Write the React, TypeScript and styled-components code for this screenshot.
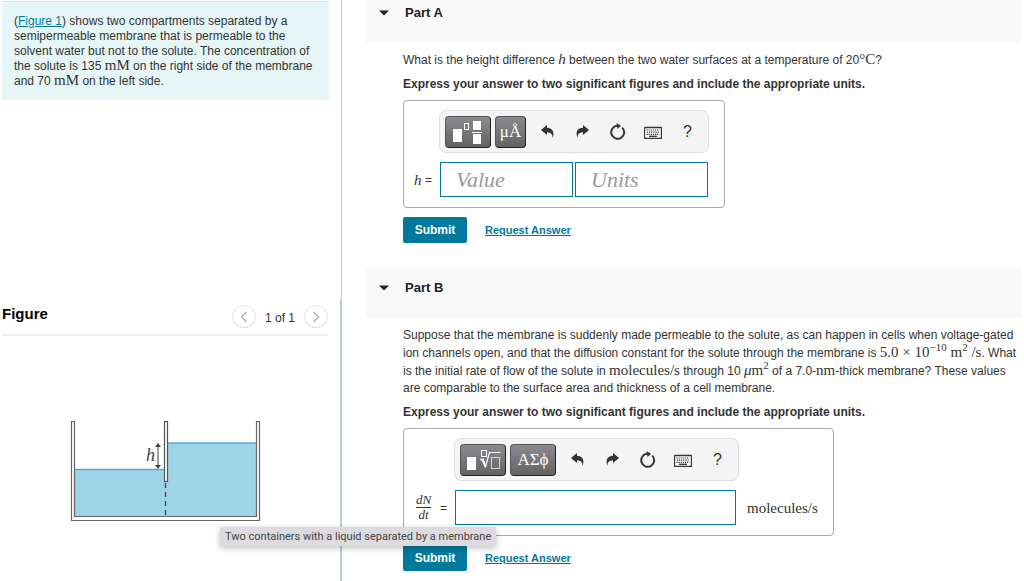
import React from "react";
import styled, { createGlobalStyle } from "styled-components";

const sans = `"Liberation Sans", Arial, sans-serif`;
const serif = `"Liberation Serif", "Times New Roman", serif`;
const teal = "#007a9c";

const GlobalStyle = createGlobalStyle`
  *, *::before, *::after { box-sizing: border-box; }
  body {
    margin: 0;
    background: #fff;
    color: #333;
    font-family: ${sans};
    font-size: 12px;
    overflow: hidden;
  }
`;

const Page = styled.div`
  display: grid;
  grid-template-columns: 342px minmax(0, 1fr);
  min-height: 100vh;
`;

const Sidebar = styled.aside`
  display: grid;
  grid-template-rows: 299px 1fr;
  min-width: 0;
`;

const IntroPane = styled.section`
  border-right: 1px solid #c3c9d6;
  padding: 1px 12px 0 2px;
`;

const Intro = styled.p`
  margin: 0;
  padding: 12px 12px 11px;
  border-top: 1px solid #d9e4e4;
  background: #e6f6f7;
  line-height: 15px;
  white-space: nowrap;
`;

const FigureLink = styled.a`
  color: ${teal};
  text-decoration: underline;
`;

const FigurePane = styled.section`
  position: relative;
  border-right: 2px solid #b9c9de;
  padding: 6px 12px 0 2px;
`;

const FigureHeader = styled.header`
  display: flex;
  align-items: flex-start;
  justify-content: space-between;
  height: 31px;
  border-bottom: 2px solid #f0f0f0;
`;

const FigureTitle = styled.h2`
  margin: 0;
  font-size: 15px;
  line-height: 18px;
  color: #000;
`;

const Pager = styled.nav`
  display: flex;
  align-items: flex-end;
  gap: 9px;
  line-height: 20px;
`;

const PagerButton = styled.button`
  display: grid;
  place-items: center;
  width: 24px;
  height: 23px;
  padding: 0;
  border: 1px solid #e3e3e3;
  border-radius: 50%;
  background: #fff;
`;

const TankWrap = styled.div`
  padding: 84px 0 0 67px;
`;

const Tooltip = styled.div`
  position: absolute;
  left: 220px;
  top: 228px;
  z-index: 2;
  padding: 0 5px;
  border-radius: 2px;
  background: #dedbe0;
  box-shadow: 0 2px 6px rgba(0, 0, 0, 0.25);
  color: #444;
  font-family: Roboto, ${sans};
  font-size: 11px;
  line-height: 19px;
  white-space: nowrap;
`;

const Main = styled.main`
  min-width: 0;
  padding: 0 3px 0 24px;
`;

const PartHeader = styled.header<{ $clipped?: boolean }>`
  display: flex;
  align-items: flex-start;
  gap: 16px;
  height: ${(p) => (p.$clipped ? 43 : 51)}px;
  padding: ${(p) => (p.$clipped ? 4 : 12)}px 12px 0;
  background: #f9f9f9;
`;

const Toggle = styled.button`
  display: grid;
  place-items: center;
  width: 11px;
  height: 18px;
  padding: 0;
  border: 0;
  background: none;
`;

const PartTitle = styled.h2`
  margin: 0;
  font-size: 13px;
  line-height: 18px;
  color: #222;
`;

const PartBody = styled.div`
  padding: 9px 0 24px 37px;
`;

const Question = styled.p`
  margin: 0;
  line-height: 17px;
  white-space: nowrap;
`;

const Instruction = styled.p`
  margin: 7px 0;
  font-weight: bold;
  line-height: 17px;
  white-space: nowrap;
`;

const Card = styled.div<{ $label: number }>`
  display: inline-grid;
  grid-template-columns: ${(p) => p.$label}px auto auto;
  align-items: center;
  align-content: start;
  row-gap: 9px;
  padding: 9px 15px 10px 10px;
  border: 1px solid #a9a9a9;
  border-radius: 4px;
  vertical-align: top;
`;

const Toolbar = styled.div`
  grid-column: 2 / -1;
  justify-self: start;
  display: flex;
  align-items: center;
  height: 43px;
  padding: 0 3px 0 5px;
  border: 1px solid #dedede;
  border-radius: 7px;
  background: #f4f4f4;
  margin-left: -1px;
`;

const PaletteButton = styled.button<{ $width: number }>`
  display: grid;
  place-items: center;
  width: ${(p) => p.$width}px;
  height: 32px;
  margin-right: 4px;
  padding: 0;
  border: 1px solid #555;
  border-right-color: #222;
  border-bottom-color: #222;
  border-radius: 4px;
  background: linear-gradient(#8b8a90, #636363);
  color: #fff;
  font-family: ${serif};
  font-size: 17px;
  line-height: 20px;
`;

const IconButton = styled.button`
  display: grid;
  place-items: center;
  width: 35px;
  height: 32px;
  padding: 0;
  border: 0;
  background: none;
  color: #333;
  font-family: ${sans};
  font-size: 16px;
`;

const Label = styled.label`
  grid-column: 1;
  display: flex;
  align-items: center;
  justify-content: space-between;
  padding-right: 8px;
  font-size: 12px;
`;

const Fraction = styled.span`
  display: inline-flex;
  flex-direction: column;
  align-items: center;
  padding-left: 2px;
  font: italic 13px/14px ${serif};

  span:first-child {
    border-bottom: 1px solid #333;
  }
`;

const Fields = styled.div`
  display: flex;
  gap: 2px;
`;

const Field = styled.input<{ $width: number }>`
  width: ${(p) => p.$width}px;
  height: 35px;
  padding: 0 15px;
  border: 1px solid ${teal};
  border-radius: 0;
  background: #fff;
  font: italic 22px/24px ${serif};

  &::placeholder {
    color: #999;
    opacity: 1;
  }
`;

const Unit = styled.span`
  padding-left: 11px;
  font: 15px/18px ${serif};
`;

const Math = styled.span`
  font-family: ${serif};
  font-size: 15px;
  line-height: 0;

  sup {
    font-size: 11px;
    line-height: 6px;
  }
`;

const Actions = styled.div`
  display: flex;
  align-items: center;
  gap: 18px;
  margin-top: 9px;
`;

const Submit = styled.button`
  width: 64px;
  height: 26px;
  padding: 0;
  border: 0;
  border-radius: 2px;
  background: ${teal};
  color: #fff;
  font: bold 12px/16px ${sans};
`;

const RequestLink = styled.a`
  color: ${teal};
  font-size: 11px;
  font-weight: bold;
  line-height: 16px;
`;

const UndoShape = () => (
  <path d="M0 5 L6 0 V2.800 C11.500 3.200 13.800 7 11.500 13 C11.500 9.200 10 7.500 6 7.300 V10 Z" fill="#333" />
);

const UndoIcon = () => (
  <svg width="13" height="13" viewBox="0 0 13 13"><UndoShape /></svg>
);

const RedoIcon = () => (
  <svg width="13" height="13" viewBox="0 0 13 13"><g transform="matrix(-1 0 0 1 13 0)"><UndoShape /></g></svg>
);

const ResetIcon = () => (
  <svg width="17" height="17" viewBox="0 0 17 17">
    <path d="M13.200 4.600 A6.500 6.500 0 1 1 8.500 2.800" fill="none" stroke="#333" strokeWidth="2" />
    <path d="M7.500 0 L12 2.800 L8.500 6 Z" fill="#333" />
  </svg>
);

const KeyboardIcon = () => (
  <svg width="18" height="15" viewBox="0 0 18 15">
    <g transform="translate(0 3)">
      <rect x="0.500" y="0.500" width="17" height="11" rx="0.500" fill="#fff" stroke="#333" strokeWidth="1.300" />
      <path d="M2.500 3 H15.500 M3 5.200 H15.500 M2.500 7.300 H15.500" stroke="#333" strokeWidth="1.200" strokeDasharray="1.200 0.900" />
      <path d="M5 9.300 H13" stroke="#333" strokeWidth="1.300" />
    </g>
  </svg>
);

const TemplateIcon = () => (
  <svg width="30" height="24" viewBox="0 0 30 24">
    <g fill="#fff">
      <rect x="0" y="9" width="9" height="13" />
      <rect x="20" y="1" width="8" height="9" />
      <rect x="19" y="12" width="10" height="1" />
      <rect x="20" y="14" width="8" height="10" />
    </g>
    <rect x="11.500" y="3.500" width="4" height="6" fill="none" stroke="#fff" />
  </svg>
);

const RootIcon = () => (
  <svg width="36" height="22" viewBox="0 0 36 22">
    <rect x="2" y="8" width="9" height="13" fill="#fff" />
    <g fill="none" stroke="#fff">
      <rect x="16.500" y="1.500" width="5" height="6" />
      <path d="M15 11 L18 10 L20.500 17.500 L24.500 3.500 H35.500" strokeWidth="1.200" />
      <path d="M17.500 10.500 L20.500 18" strokeWidth="2" />
      <rect x="26.500" y="8.500" width="8" height="11" stroke="#d6d6d6" />
    </g>
  </svg>
);

const Chevron = ({ right }: { right?: boolean }) => (
  <svg width="8" height="12" viewBox="0 0 8 12">
    <path d={right ? "M1.500 1 L6.500 6 L1.500 11" : "M6.500 1 L1.500 6 L6.500 11"} fill="none" stroke="#b5b5b5" strokeWidth="1.500" />
  </svg>
);

const Tank = () => (
  <svg width="192" height="102" viewBox="0 0 192 102" role="img" aria-label="Two containers with a liquid separated by a membrane">
    <path d="M5 49 H95 V23 H187 V97 H5 Z" fill="#9fd3e8" />
    <path d="M5 49.500 H95 M98 23 H187" stroke="#55acd8" strokeWidth="1.500" />
    <path d="M2.500 1.500 H5.500 V96.500 H187.500 V1.500 H190.500 V100.500 H2.500 Z" fill="#fff" stroke="#666" strokeWidth="1.200" />
    <rect x="95.500" y="1.500" width="3" height="60" fill="#fff" stroke="#555" strokeWidth="1.200" />
    <path d="M96.500 63 V97" stroke="#444" strokeWidth="1.300" strokeDasharray="5 4" />
    <path d="M89 25 V47" stroke="#444" />
    <path d="M89 23 L92 27 H86 Z M89 49 L92 45 H86 Z" fill="#444" />
    <text x="77" y="41" fontFamily="Liberation Serif, serif" fontStyle="italic" fontSize="18" fill="#444">h</text>
  </svg>
);

const EditIcons = () => (
  <>
    <IconButton type="button" aria-label="Undo"><UndoIcon /></IconButton>
    <IconButton type="button" aria-label="Redo"><RedoIcon /></IconButton>
    <IconButton type="button" aria-label="Reset"><ResetIcon /></IconButton>
    <IconButton type="button" aria-label="Keyboard shortcuts"><KeyboardIcon /></IconButton>
    <IconButton type="button">?</IconButton>
  </>
);

const PartHead = ({ title, clipped }: { title: string; clipped?: boolean }) => (
  <PartHeader $clipped={clipped}>
    <Toggle type="button" aria-label={title} aria-expanded="true">
      <svg width="10" height="6" viewBox="0 0 10 6"><path d="M0 0.500 H10 L5 5.500 Z" fill="#222" /></svg>
    </Toggle>
    <PartTitle>{title}</PartTitle>
  </PartHeader>
);

const SubmitRow = () => (
  <Actions>
    <Submit type="button">Submit</Submit>
    <RequestLink href="#request">Request Answer</RequestLink>
  </Actions>
);

export default function App() {
  return (
    <>
      <GlobalStyle />
      <Page>
        <Sidebar>
          <IntroPane>
            <Intro>
              (<FigureLink href="#figure">Figure 1</FigureLink>) shows two compartments separated by a<br />
              semipermeable membrane that is permeable to the<br />
              solvent water but not to the solute. The concentration of<br />
              the solute is 135 <Math>mM</Math> on the right side of the membrane<br />
              and 70 <Math>mM</Math> on the left side.
            </Intro>
          </IntroPane>
          <FigurePane id="figure">
            <FigureHeader>
              <FigureTitle>Figure</FigureTitle>
              <Pager>
                <PagerButton type="button" aria-label="Previous figure"><Chevron /></PagerButton>
                <span>1 of 1</span>
                <PagerButton type="button" aria-label="Next figure"><Chevron right /></PagerButton>
              </Pager>
            </FigureHeader>
            <TankWrap><Tank /></TankWrap>
            <Tooltip role="tooltip">Two containers with a liquid separated by a membrane</Tooltip>
          </FigurePane>
        </Sidebar>
        <Main>
          <PartHead title="Part A" clipped />
          <PartBody>
            <Question>
              What is the height difference <Math><i>h</i></Math> between the two water surfaces at a temperature of 20<Math>°C</Math>?
            </Question>
            <Instruction>Express your answer to two significant figures and include the appropriate units.</Instruction>
            <Card $label={26}>
              <Toolbar>
                <PaletteButton type="button" $width={46} aria-label="Templates"><TemplateIcon /></PaletteButton>
                <PaletteButton type="button" $width={31}>μÅ</PaletteButton>
                <EditIcons />
              </Toolbar>
              <Label htmlFor="value"><Math><i>h</i></Math>=</Label>
              <Fields>
                <Field id="value" $width={133} placeholder="Value" />
                <Field aria-label="Units" $width={133} placeholder="Units" />
              </Fields>
            </Card>
            <SubmitRow />
          </PartBody>
          <PartHead title="Part B" />
          <PartBody>
            <Question>
              Suppose that the membrane is suddenly made permeable to the solute, as can happen in cells when voltage-gated<br />
              ion channels open, and that the diffusion constant for the solute through the membrane is <Math>5.0 × 10<sup>−10</sup> m<sup>2</sup> /s</Math>. What<br />
              is the initial rate of flow of the solute in <Math>molecules/s</Math> through 10 <Math><i>μ</i>m<sup>2</sup></Math> of a 7.0-<Math>nm</Math>-thick membrane? These values<br />
              are comparable to the surface area and thickness of a cell membrane.
            </Question>
            <Instruction>Express your answer to two significant figures and include the appropriate units.</Instruction>
            <Card $label={41}>
              <Toolbar>
                <PaletteButton type="button" $width={46} aria-label="Templates"><RootIcon /></PaletteButton>
                <PaletteButton type="button" $width={46}>ΑΣϕ</PaletteButton>
                <EditIcons />
              </Toolbar>
              <Label htmlFor="rate"><Fraction><span>dN</span><span>dt</span></Fraction>=</Label>
              <Fields>
                <Field id="rate" $width={281} />
              </Fields>
              <Unit>molecules/s</Unit>
            </Card>
            <SubmitRow />
          </PartBody>
        </Main>
      </Page>
    </>
  );
}
